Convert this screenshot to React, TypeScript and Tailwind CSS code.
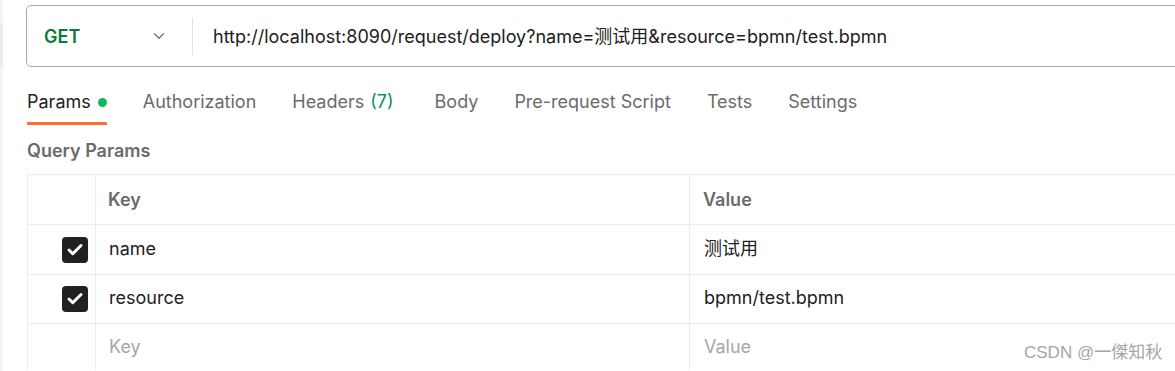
import React from 'react';
import { ChevronDown, Check } from 'lucide-react';

const tabs = [
  { label: 'Authorization' },
  { label: 'Headers', count: '(7)' },
  { label: 'Body', extra: true },
  { label: 'Pre-request Script' },
  { label: 'Tests' },
  { label: 'Settings' },
];

const rows = [
  { key: 'name', value: '测试用', checked: true, h: 'h-[50px]', pb: 'pb-[2px]' },
  { key: 'resource', value: 'bpmn/test.bpmn', checked: true, h: 'h-[49px]', pb: 'pb-[3px]' },
];

const Checkbox = () => (
  <div className="w-[26px] h-[26px] rounded-[4px] bg-[#212121] flex items-center justify-center">
    <Check className="w-[18px] h-[18px] text-white" strokeWidth={4} />
  </div>
);

const App = () => {
  return (
    <div
      className="relative w-[1175px] h-[371px] overflow-hidden bg-white flex text-[#212121]"
      style={{ fontFamily: 'Inter, "Noto Sans CJK SC", sans-serif' }}
    >
      {/* left edge of the sidebar */}
      <div className="w-[3px] shrink-0 flex flex-col bg-[#f4f4f4]">
        <div className="h-[23px]" />
        <div className="h-[43px] bg-[#ececec]" />
      </div>

      <div className="flex-1 min-w-0 pl-[23px] flex flex-col">
        {/* Request URL bar */}
        <div className="mt-[5px] w-[1160px] h-[62px] shrink-0 border border-[#a9a9a9] rounded-[5px] flex items-center">
          <div className="w-[165px] pl-[17px] pr-[24px] flex items-center justify-between">
            <span className="text-[18px] font-semibold text-[#0b7a36]">GET</span>
            <ChevronDown className="w-[18px] h-[18px] text-[#6b6b6b]" strokeWidth={1.5} />
          </div>
          <div className="w-px h-[37px] bg-[#e2e2e2]" />
          <div className="pl-[20px] text-[18px] text-[#212121] whitespace-nowrap">
            http://localhost:8090/request/deploy?name=测试用&amp;resource=bpmn/test.bpmn
          </div>
        </div>

        {/* Tabs */}
        <div className="mt-[23px] flex gap-[36px] pl-[1px]">
          <div className="flex flex-col">
            <div className="h-[24px] leading-[24px] text-[18px] flex items-center gap-[7px] text-[#212121]">
              Params
              <span className="w-[9px] h-[9px] rounded-full bg-[#0cbb52]" />
            </div>
            <div className="mt-[8px] h-[3px] bg-[#ff6c37]" />
          </div>
          {tabs.map((t) => (
            <div key={t.label} className={`flex flex-col ${t.extra ? 'ml-[5px]' : ''}`}>
              <div className="h-[24px] leading-[24px] text-[18px] text-[#6b6b6b] whitespace-nowrap">
                {t.label}
                {t.count && <span className="ml-[6px] text-[#0a8f6c]">{t.count}</span>}
              </div>
              <div className="mt-[8px] h-[3px]" />
            </div>
          ))}
        </div>

        {/* Query Params */}
        <div className="mt-[15px] pl-[1px] h-[22px] leading-[22px] text-[18px] font-semibold text-[#6b6b6b]">
          Query Params
        </div>

        <div className="mt-[12px] ml-[1px] w-[1160px] border-l border-t border-[#ececec]">
          <div className="grid grid-cols-[68px_594px_1fr] h-[50px] border-b border-[#ececec]">
            <div className="border-r border-[#ececec]" />
            <div className="border-r border-[#ececec] pl-[12px] flex items-center text-[18px] font-semibold text-[#6b6b6b]">
              Key
            </div>
            <div className="pl-[13px] flex items-center text-[18px] font-semibold text-[#6b6b6b]">Value</div>
          </div>
          {rows.map((r) => (
            <div key={r.key} className={`grid grid-cols-[68px_594px_1fr] ${r.h} border-b border-[#ececec]`}>
              <div className="border-r border-[#ececec] flex items-center justify-end pr-[7px]">
                {r.checked && <Checkbox />}
              </div>
              <div className={`border-r border-[#ececec] pl-[13px] ${r.pb} flex items-center text-[18px]`}>{r.key}</div>
              <div className={`pl-[14px] ${r.pb} flex items-center text-[18px]`}>{r.value}</div>
            </div>
          ))}
          <div className="grid grid-cols-[68px_594px_1fr] h-[46px]">
            <div className="border-r border-[#ececec]" />
            <div className="border-r border-[#ececec] pl-[13px] pb-[2px] flex items-center text-[18px] text-[#a6a6a6]">Key</div>
            <div className="pl-[14px] pb-[2px] flex items-center text-[18px] text-[#a6a6a6]">Value</div>
          </div>
        </div>
      </div>

      {/* watermark */}
      <div
        className="absolute left-[1024px] top-[342px] text-[17px] leading-[22px] text-[#a5a5a5] whitespace-nowrap"
        style={{ fontFamily: '"Liberation Sans", "Noto Sans CJK SC", sans-serif' }}
      >
        CSDN @一傑知秋
      </div>
    </div>
  );
};

export default App;
